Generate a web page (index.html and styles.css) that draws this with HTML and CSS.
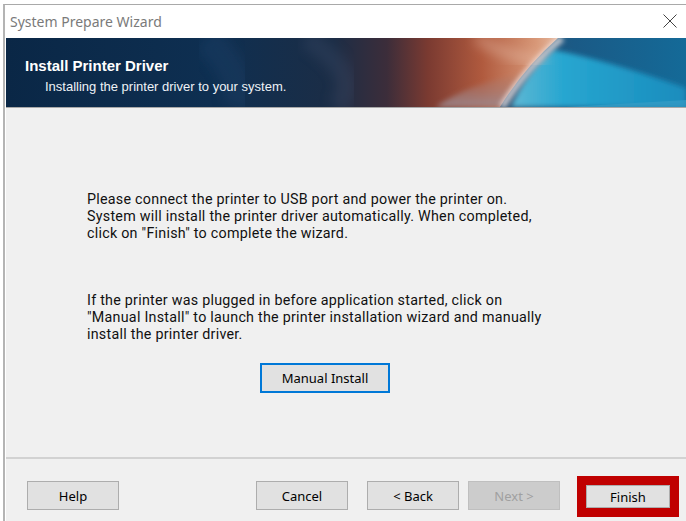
FILE: index.html
```html
<!DOCTYPE html>
<html>
<head>
<meta charset="utf-8">
<link rel="stylesheet" href="styles.css">
</head>
<body>
<div class="window">
  <div class="titlebar">
    <span class="title">System Prepare Wizard</span>
    <svg class="close" width="14" height="14" viewBox="0 0 14 14"><path d="M0.5 0.5L13.5 13.5M13.5 0.5L0.5 13.5" stroke="#444" stroke-width="1" fill="none"/></svg>
  </div>
  <div class="frame">
    <div class="banner">
      <svg class="banner-art" width="680" height="69" viewBox="0 0 680 69" preserveAspectRatio="none">
        <defs>
          <linearGradient id="base" x1="0" y1="0" x2="1" y2="0">
            <stop offset="0" stop-color="#0a2746"/>
            <stop offset="0.3" stop-color="#0e2f51"/>
            <stop offset="0.48" stop-color="#1b2d46"/>
            <stop offset="0.56" stop-color="#3c2d3a"/>
            <stop offset="0.62" stop-color="#7a3a31"/>
            <stop offset="0.7" stop-color="#b05a3e"/>
            <stop offset="0.78" stop-color="#d89878"/>
            <stop offset="0.82" stop-color="#e8c0a8"/>
          </linearGradient>
          <linearGradient id="blue" x1="0" y1="0" x2="1" y2="0">
            <stop offset="0" stop-color="#2e4f70"/>
            <stop offset="0.4" stop-color="#1a5a86"/>
            <stop offset="1" stop-color="#146a98"/>
          </linearGradient>
          <linearGradient id="cyan" x1="0" y1="0" x2="1" y2="0">
            <stop offset="0" stop-color="#5fb8d4"/>
            <stop offset="0.3" stop-color="#27a6d0"/>
            <stop offset="1" stop-color="#1a8cbd"/>
          </linearGradient>
          <linearGradient id="mauve" x1="0" y1="0" x2="0" y2="1">
            <stop offset="0" stop-color="#b07a6a" stop-opacity="0"/>
            <stop offset="1" stop-color="#9a8890" stop-opacity="0.9"/>
          </linearGradient>
          <filter id="blur" x="-20%" y="-20%" width="140%" height="140%"><feGaussianBlur stdDeviation="2.5"/></filter>
          <filter id="blur2" x="-20%" y="-20%" width="140%" height="140%"><feGaussianBlur stdDeviation="6"/></filter>
        </defs>
        <rect width="680" height="69" fill="url(#base)"/>
        <path d="M300 0 Q 360 40 330 69" stroke="#3a4a66" stroke-width="20" fill="none" opacity="0.35" filter="url(#blur2)"/>
        <path d="M200 0 Q 240 40 230 69" stroke="#1c4068" stroke-width="30" fill="none" opacity="0.4" filter="url(#blur2)"/>
        <path d="M430 69 Q 470 40 548 30 L 560 69 Z" fill="url(#mauve)" filter="url(#blur)"/>
        <path d="M552 0 Q 518 30 494 69 L 680 69 L 680 0 Z" fill="url(#blue)"/>
        <path d="M548 12 Q 600 22 680 50 L 680 69 L 505 69 Q 520 35 548 12 Z" fill="url(#cyan)" filter="url(#blur)"/>
        <path d="M680 62 L 560 69 L 680 69 Z" fill="#3aa0c8" opacity="0.6"/>
        <path d="M556 0 Q 520 30 496 69" stroke="#f2e6e4" stroke-width="7" fill="none" opacity="0.75" filter="url(#blur)"/>
        <path d="M470 0 Q 500 20 540 22" stroke="#f0d0c0" stroke-width="10" fill="none" opacity="0.35" filter="url(#blur2)"/>
      </svg>
      <div class="banner-text">
        <div class="banner-title">Install Printer Driver</div>
        <div class="banner-sub">Installing the printer driver to your system.</div>
      </div>
    </div>
    <div class="content">
      <p class="para">Please connect the printer to USB port and power the printer on.<br>System will install the printer driver automatically. When completed,<br>click on "Finish" to complete the wizard.</p>
      <p class="para para2">If the printer was plugged in before application started, click on<br>"Manual Install" to launch the printer installation wizard and manually<br>install the printer driver.</p>
      <div class="manual-row"><button class="btn btn-focus">Manual Install</button></div>
    </div>
    <div class="footer">
      <button class="btn">Help</button>
      <div class="spacer"></div>
      <button class="btn">Cancel</button>
      <button class="btn btn-back">&lt; Back</button>
      <button class="btn btn-disabled">Next &gt;</button>
      <div class="highlight"><button class="btn btn-finish">Finish</button></div>
    </div>
  </div>
</div>
</body>
</html>
```
FILE: styles.css
```css
html, body {
  margin: 0;
  padding: 0;
  background: #ffffff;
  overflow: hidden;
}
body {
  width: 686px;
  height: 521px;
  font-family: "Noto Sans", "Open Sans", sans-serif;
}
.window {
  margin: 4px 0 0 3px;
  height: 517px;
  border-top: 1px solid #a9a9a9;
  border-left: 2px solid #b4b4b4;
  background: #ffffff;
  display: flex;
  flex-direction: column;
  box-sizing: border-box;
}
.titlebar {
  height: 33px;
  flex: none;
  display: flex;
  align-items: center;
  justify-content: space-between;
  padding: 0 9px 0 5px;
}
.title {
  font-family: "Noto Sans", sans-serif;
  font-size: 14px;
  color: #7a7a7a;
  margin-top: -1px;
}
.close {
  display: block;
  margin-top: -1px;
}
.frame {
  flex: 1;
  display: flex;
  flex-direction: column;
  padding-left: 1px;
  background: #ffffff;
}
.banner {
  height: 69px;
  flex: none;
  display: grid;
  border-bottom: 1px solid #a8a8a8;
  overflow: hidden;
}
.banner-art {
  grid-area: 1 / 1;
  display: block;
}
.banner-text {
  grid-area: 1 / 1;
  padding: 19px 0 0 19px;
  color: #ffffff;
  font-family: "Liberation Sans", sans-serif;
}
.banner-title {
  font-weight: bold;
  font-size: 15px;
  line-height: 17px;
}
.banner-sub {
  font-size: 13px;
  line-height: 16px;
  margin: 5px 0 0 20px;
  color: #eef2f6;
}
.content {
  background: #f0f0f0;
  flex: 1;
  padding: 83px 0 0 81px;
  border-bottom: 2px solid #d2d2d2;
}
.para {
  margin: 0;
  font-family: "Roboto", "Noto Sans", sans-serif;
  font-size: 14.3px;
  letter-spacing: 0.25px;
  line-height: 17px;
  color: #111111;
}
.para2 {
  margin-top: 50px;
}
.manual-row {
  padding: 20px 0 0 173px;
}
.btn {
  font-family: "Noto Sans", sans-serif;
  font-size: 13px;
  color: #000;
  background: #e1e1e1;
  border: 1px solid #adadad;
  width: 92px;
  height: 29px;
  padding: 0;
  margin: 0;
  border-radius: 0;
}
.btn-focus {
  width: 130px;
  height: 30px;
  border: 2px solid #0078d7;
}
.btn-disabled {
  background: #cccccc;
  border-color: #bfbfbf;
  color: #a0a0a0;
}
.footer {
  background: #f0f0f0;
  height: 62px;
  flex: none;
  display: flex;
  align-items: flex-start;
  padding: 22px 0 0 21px;
  box-sizing: border-box;
}
.spacer {
  flex: 1;
}
.btn-back {
  margin-left: 19px;
  margin-right: 9px;
}
.highlight {
  border: 9px solid #c00000;
  margin: -5px 7px 0 17px;
  display: flex;
}
.footer .btn-finish {
  margin: 0;
  width: 84px;
  height: 23px;
}
```
